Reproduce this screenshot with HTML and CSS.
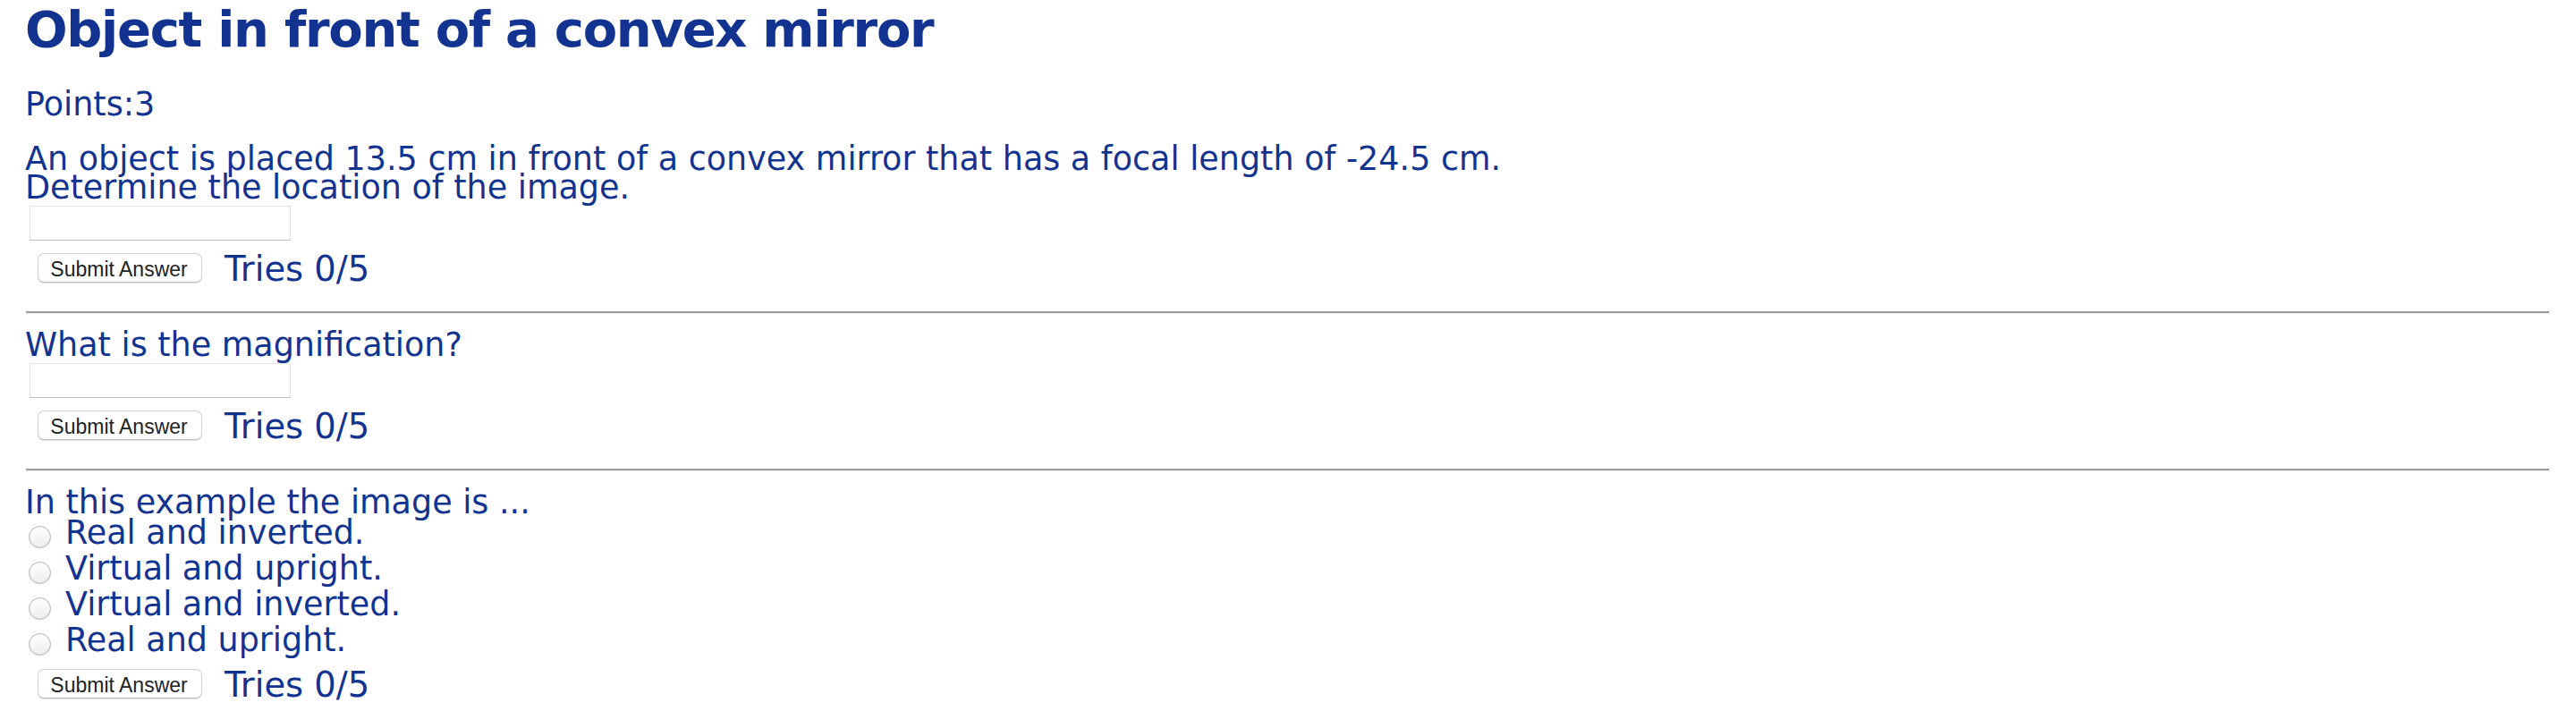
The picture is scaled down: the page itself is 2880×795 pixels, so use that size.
FILE: index.html
```html
<!DOCTYPE html>
<html lang="en">
<head>
<meta charset="utf-8">
<title>Object in front of a convex mirror</title>
<link rel="stylesheet" href="styles.css">
</head>
<body>
<h1 class="title">Object in front of a convex mirror</h1>
<div class="points">Points:3</div>

<section class="part part-first">
  <p class="prompt">An object is placed 13.5 cm in front of a convex mirror that has a focal length of -24.5 cm.<br>Determine the location of the image.</p>
  <input class="answer" type="text" aria-label="Location of the image">
  <div class="submit-row">
    <button class="submit" type="button">Submit Answer</button>
    <span class="tries">Tries 0/5</span>
  </div>
</section>

<hr class="divider">

<section class="part">
  <p class="prompt">What is the magnification?</p>
  <input class="answer" type="text" aria-label="Magnification">
  <div class="submit-row">
    <button class="submit" type="button">Submit Answer</button>
    <span class="tries">Tries 0/5</span>
  </div>
</section>

<hr class="divider">

<section class="part">
  <p class="prompt">In this example the image is ...</p>
  <div class="options">
    <label class="option"><input class="radio" type="radio" name="img"><span class="option-text">Real and inverted.</span></label>
    <label class="option"><input class="radio" type="radio" name="img"><span class="option-text">Virtual and upright.</span></label>
    <label class="option"><input class="radio" type="radio" name="img"><span class="option-text">Virtual and inverted.</span></label>
    <label class="option"><input class="radio" type="radio" name="img"><span class="option-text">Real and upright.</span></label>
  </div>
  <div class="submit-row submit-row-options">
    <button class="submit" type="button">Submit Answer</button>
    <span class="tries">Tries 0/5</span>
  </div>
</section>
</body>
</html>
```

FILE: styles.css
```css
html, body {
  margin: 0;
  background: #ffffff;
}

body {
  padding: 1px 30px 0 28px;
  font-family: "DejaVu Sans", Verdana, sans-serif;
  font-size: 36.5px;
  line-height: 32px;
  color: #12338f;
}

.title {
  margin: 0;
  font-size: 56px;
  line-height: 64px;
  font-weight: bold;
  letter-spacing: -1.3px;
  color: #12338f;
}

.points {
  margin-top: 35.5px;
}

.prompt {
  margin: 0;
}

.part .prompt {
  margin-top: 19.5px;
}

.part-first .prompt {
  margin-top: 29.7px;
}

.answer {
  display: block;
  box-sizing: border-box;
  width: 292px;
  height: 39px;
  margin: 4px 0 0 5px;
  padding: 0 8px;
  border: 1px solid #e3e3e3;
  border-bottom-color: #bcbcbc;
  border-radius: 0;
  background: #ffffff;
  font: 24px "Liberation Sans", Arial, sans-serif;
}

.submit-row {
  display: flex;
  align-items: flex-start;
  margin-top: 13.5px;
  height: 35px;
}

.submit {
  box-sizing: border-box;
  width: 184px;
  height: 33px;
  margin-left: 14px;
  padding: 4px 2px 0 0;
  border: 1px solid #d2d2d2;
  border-bottom-color: #bdbdbd;
  border-radius: 7px;
  background: #ffffff;
  box-shadow: 0 1px 1px rgba(0, 0, 0, 0.12);
  font-family: "Liberation Sans", Arial, Helvetica, sans-serif;
  font-size: 23px;
  line-height: 27px;
  color: #222222;
  text-align: center;
  vertical-align: top;
}

.tries {
  margin-left: 25px;
  margin-top: 2px;
  font-size: 38.5px;
  line-height: 32px;
}

.divider {
  margin: 30px 0 0 1px;
  height: 0;
  border: 0;
  border-top: 2px solid #9c9c9c;
  border-bottom: 1px solid #ececec;
}

.options {
  display: flex;
  flex-direction: column;
}

.option {
  display: flex;
  align-items: flex-start;
  height: 40px;
}

.radio {
  appearance: none;
  -webkit-appearance: none;
  box-sizing: border-box;
  width: 25px;
  height: 25px;
  margin: 10px 0 0 4px;
  border: 1px solid #b4b4b4;
  border-radius: 50%;
  background: linear-gradient(#ffffff, #ededed);
  box-shadow: inset 0 -1px 1px rgba(0, 0, 0, 0.06);
  flex: none;
}

.option-text {
  margin: 2px 0 0 16px;
  line-height: 32px;
}

.submit-row-options {
  margin-top: 9.5px;
}
```
